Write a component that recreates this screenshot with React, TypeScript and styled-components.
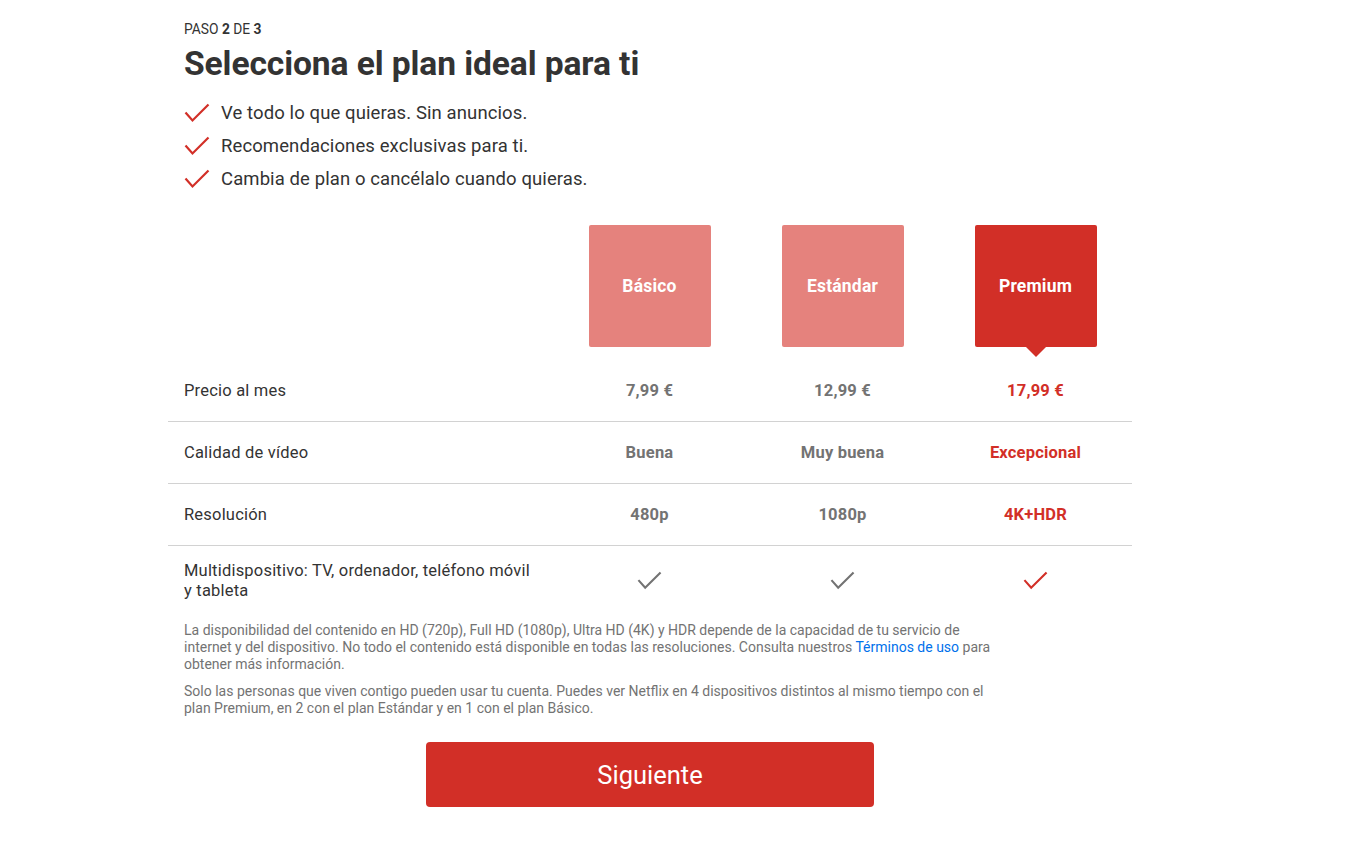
import React from "react";
import styled, { createGlobalStyle } from "styled-components";

const RED = "#d22f27";
const LIGHT_RED = "#e5827d";
const DARK = "#333333";
const GRAY = "#737373";

const GlobalStyle = createGlobalStyle`
  html, body {
    margin: 0;
    padding: 0;
    background: #ffffff;
  }
  body {
    font-family: Roboto, "Noto Sans", "Liberation Sans", sans-serif;
    color: ${DARK};
    -webkit-font-smoothing: antialiased;
  }
  * { box-sizing: border-box; }
`;

const Page = styled.main`
  width: 964px;
  margin-left: 168px;
  padding-top: 21px;
  padding-bottom: 40px;
`;

const Header = styled.header`
  padding-left: 16px;
`;

const Step = styled.div`
  font-size: 13.8px;
  line-height: 16px;
  text-transform: uppercase;
  color: ${DARK};
  b { font-weight: 700; }
`;

const Title = styled.h1`
  margin: 7px 0 0;
  font-size: 33.6px;
  line-height: 40px;
  font-weight: 700;
  color: ${DARK};
  letter-spacing: -0.1px;
`;

const Checklist = styled.ul`
  list-style: none;
  margin: 17px 0 0;
  padding: 0;
  display: flex;
  flex-direction: column;
  gap: 9px;
`;

const CheckItem = styled.li`
  display: flex;
  align-items: center;
  gap: 11px;
  font-size: 18.5px;
  line-height: 24px;
  letter-spacing: 0.1px;
  color: ${DARK};
`;

const Table = styled.section`
  margin-top: 34px;
  display: grid;
  grid-template-columns: 385px 193px 193px 193px;
`;

const PlanCell = styled.div`
  display: flex;
  justify-content: center;
  padding-bottom: 13px;
`;

const PlanBox = styled.div<{ $selected?: boolean }>`
  position: relative;
  width: 122px;
  height: 122px;
  border-radius: 2px;
  background: ${(p) => (p.$selected ? RED : LIGHT_RED)};
  color: #ffffff;
  font-size: 17.5px;
  font-weight: 700;
  letter-spacing: 0.2px;
  display: flex;
  align-items: center;
  justify-content: center;
  &::after {
    content: "";
    display: ${(p) => (p.$selected ? "block" : "none")};
    position: absolute;
    left: 50%;
    bottom: -10px;
    margin-left: -10px;
    border-left: 10px solid transparent;
    border-right: 10px solid transparent;
    border-top: 10px solid ${RED};
  }
`;

const Label = styled.div<{ $last?: boolean }>`
  display: flex;
  align-items: center;
  min-height: 62px;
  padding: ${(p) => (p.$last ? "14px 20px 6px 16px" : "0 20px 0 16px")};
  font-size: 16.5px;
  line-height: 20px;
  letter-spacing: 0.2px;
  color: ${DARK};
  border-bottom: ${(p) => (p.$last ? "none" : "1px solid #d2d2d2")};
`;

const LabelText = styled.span`
  max-width: 350px;
`;

const Value = styled.div<{ $selected?: boolean; $last?: boolean; $border?: boolean }>`
  display: flex;
  align-items: center;
  justify-content: center;
  min-height: 62px;
  padding-top: ${(p) => (p.$last ? "8px" : "0")};
  font-size: 16.5px;
  font-weight: 700;
  letter-spacing: 0.2px;
  color: ${(p) => (p.$selected ? RED : GRAY)};
  border-bottom: ${(p) => (p.$border ? "1px solid #d2d2d2" : "none")};
`;

const Notes = styled.div`
  padding-left: 16px;
  width: 831px;
  margin-top: 14px;
  display: flex;
  flex-direction: column;
  gap: 10px;
`;

const Note = styled.p`
  margin: 0;
  font-size: 14px;
  line-height: 17px;
  color: ${GRAY};
  a {
    color: #0071eb;
    text-decoration: none;
  }
`;

const ButtonRow = styled.div`
  display: flex;
  justify-content: center;
  margin-top: 25px;
`;

const NextButton = styled.button`
  width: 448px;
  height: 65px;
  border: none;
  border-radius: 4px;
  background: ${RED};
  color: #ffffff;
  font-family: inherit;
  font-size: 25.5px;
  font-weight: 400;
  cursor: pointer;
`;

const Check: React.FC<{ color: string; width?: number }> = ({ color, width = 26 }) => (
  <svg width={width} height={(width * 20) / 26} viewBox="0 0 26 20" fill="none">
    <path
      d="M1.5 9.5 L8.5 17.5 L24.5 1.5"
      stroke={color}
      strokeWidth={2.2}
      strokeLinecap="butt"
      strokeLinejoin="miter"
    />
  </svg>
);

type Plan = { name: string; price: string; quality: string; res: string };

const plans: Plan[] = [
  { name: "Básico", price: "7,99 €", quality: "Buena", res: "480p" },
  { name: "Estándar", price: "12,99 €", quality: "Muy buena", res: "1080p" },
  { name: "Premium", price: "17,99 €", quality: "Excepcional", res: "4K+HDR" },
];

const SELECTED = 2;

export default function App() {
  return (
    <>
      <GlobalStyle />
      <Page>
        <Header>
          <Step>
            Paso <b>2</b> de <b>3</b>
          </Step>
          <Title>Selecciona el plan ideal para ti</Title>
          <Checklist>
            {[
              "Ve todo lo que quieras. Sin anuncios.",
              "Recomendaciones exclusivas para ti.",
              "Cambia de plan o cancélalo cuando quieras.",
            ].map((t) => (
              <CheckItem key={t}>
                <Check color={RED} />
                {t}
              </CheckItem>
            ))}
          </Checklist>
        </Header>

        <Table>
          <div />
          {plans.map((p, i) => (
            <PlanCell key={p.name}>
              <PlanBox $selected={i === SELECTED}>{p.name}</PlanBox>
            </PlanCell>
          ))}

          <Label>Precio al mes</Label>
          {plans.map((p, i) => (
            <Value key={p.name} $selected={i === SELECTED} $border>
              {p.price}
            </Value>
          ))}

          <Label>Calidad de vídeo</Label>
          {plans.map((p, i) => (
            <Value key={p.name} $selected={i === SELECTED} $border>
              {p.quality}
            </Value>
          ))}

          <Label>Resolución</Label>
          {plans.map((p, i) => (
            <Value key={p.name} $selected={i === SELECTED} $border>
              {p.res}
            </Value>
          ))}

          <Label $last>
            <LabelText>Multidispositivo: TV, ordenador, teléfono móvil y tableta</LabelText>
          </Label>
          {plans.map((p, i) => (
            <Value key={p.name} $selected={i === SELECTED} $last>
              <Check color={i === SELECTED ? RED : GRAY} width={25} />
            </Value>
          ))}
        </Table>

        <Notes>
          <Note>
            La disponibilidad del contenido en HD (720p), Full HD (1080p), Ultra HD (4K) y HDR
            depende de la capacidad de tu servicio de internet y del dispositivo. No todo el
            contenido está disponible en todas las resoluciones. Consulta nuestros{" "}
            <a href="#">Términos de uso</a> para obtener más información.
          </Note>
          <Note>
            Solo las personas que viven contigo pueden usar tu cuenta. Puedes ver Netflix en 4
            dispositivos distintos al mismo tiempo con el plan Premium, en 2 con el plan Estándar
            y en 1 con el plan Básico.
          </Note>
        </Notes>

        <ButtonRow>
          <NextButton>Siguiente</NextButton>
        </ButtonRow>
      </Page>
    </>
  );
}
